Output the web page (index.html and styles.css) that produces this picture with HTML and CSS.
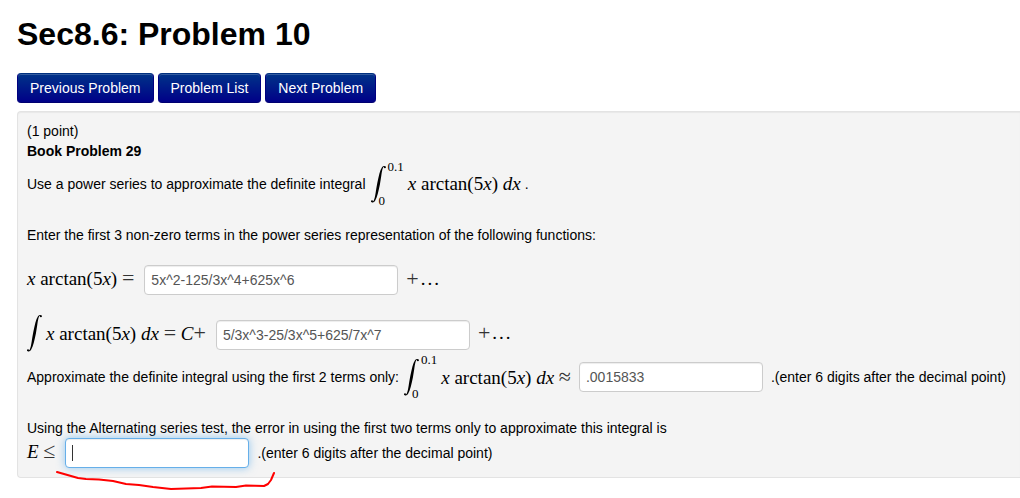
FILE: index.html
```html
<!DOCTYPE html>
<html lang="en">
<head>
    <meta charset="UTF-8">
    <meta name="viewport" content="width=device-width, initial-scale=1.0">
    <title>Sec8.6: Problem 10</title>
    <link rel="stylesheet" href="styles.css">
</head>
<body>
    <svg class="symbols" width="0" height="0" aria-hidden="true">
        <symbol id="integral" viewBox="0 0 15 38">
            <path d="M14.600 2C13.800.6 12.300.5 11 2.200 8.800 5.200 7.900 10.500 6.400 17.500 4.900 24.500 4.500 32 2.800 35.500 2.200 36.800 1.200 36.800.6 36L.2 36.600C1.200 38 2.900 37.800 4.100 35.800 6.200 32.200 7.400 26.500 8.900 19.500 10.300 12.500 10.600 6 12 2.800 12.600 1.400 13.400 1.500 14.100 2.600Z" fill="currentColor"/>
            <circle cx="13.900" cy="2.200" r="1" fill="currentColor"/>
            <circle cx="1" cy="36.200" r="1" fill="currentColor"/>
        </symbol>
    </svg>

    <h1>Sec8.6: Problem 10</h1>

    <nav class="nav">
        <a href="#previous" class="btn">Previous Problem</a>
        <a href="#list" class="btn">Problem List</a>
        <a href="#next" class="btn">Next Problem</a>
    </nav>

    <form class="problem">
        <div>(1 point)</div>
        <div><b>Book Problem 29</b></div>

        <div class="row tall">
            <span>Use a power series to approximate the definite integral</span>
            <span class="math">
                <svg class="int"><use href="#integral"/></svg>
                <span class="limits"><span>0.1</span><span class="lower">0</span></span>
                <span><i>x</i> arctan(5<i>x</i>) <i>dx</i></span>
            </span>
            <span>.</span>
        </div>

        <p>Enter the first 3 non-zero terms in the power series representation of the following functions:</p>

        <div class="row">
            <label class="math" for="series"><span><i>x</i> arctan(5<i>x</i>) <span class="op">=</span></span></label>
            <input type="text" id="series" class="wide" value="5x^2-125/3x^4+625x^6">
            <span class="math dots"><span class="op">+</span>...</span>
        </div>

        <div class="row second">
            <label class="math" for="antiderivative">
                <svg class="int"><use href="#integral"/></svg>
                <span><i>x</i> arctan(5<i>x</i>) <i>dx</i> <span class="op">=</span> <i>C</i><span class="op">+</span></span>
            </label>
            <input type="text" id="antiderivative" class="wide" value="5/3x^3-25/3x^5+625/7x^7">
            <span class="math dots"><span class="op">+</span>...</span>
        </div>

        <div class="row tall">
            <span>Approximate the definite integral using the first 2 terms only:</span>
            <label class="math" for="approx">
                <svg class="int"><use href="#integral"/></svg>
                <span class="limits"><span>0.1</span><span class="lower">0</span></span>
                <span><i>x</i> arctan(5<i>x</i>) <i>dx</i> <span class="op">≈</span></span>
            </label>
            <input type="text" id="approx" value=".0015833">
            <span class="note">.(enter 6 digits after the decimal point)</span>
        </div>

        <div class="closing">Using the Alternating series test, the error in using the first two terms only to approximate this integral is</div>

        <div class="row">
            <label class="math" for="error"><span><i>E</i> <span class="op">≤</span></span></label>
            <span class="field">
                <input type="text" id="error" autofocus>
                <span class="caret"></span>
            </span>
            <span class="note">.(enter 6 digits after the decimal point)</span>
            <svg class="mark" viewBox="0 0 220 22" aria-hidden="true">
                <path d="M1 2 8 4 22 8 30 9 43 9.500 57 11 70 14 83 15 97 17 115 19 145 18 156 16.500 180 17 190 15.500 208 16 212 14 215 10 218 3"/>
            </svg>
        </div>
    </form>
</body>
</html>
```
FILE: styles.css
```css
body {
    margin: 0;
    padding: 14px 0 20px 17px;
    background-color: #fff;
    color: #000;
    font-family: "Liberation Sans", Arial, sans-serif;
    font-size: 14px;
    line-height: 20px;
}

.symbols {
    position: absolute;
}

h1 {
    margin: 0 0 19px;
    font-size: 32px;
    line-height: 40px;
}

.nav {
    display: flex;
    gap: 4px;
    margin-bottom: 8px;
}

.btn {
    padding: 4px 12px;
    border: 1px solid #002266;
    border-color: #003080 #000080 #000070;
    border-radius: 4px;
    background-image: linear-gradient(#003388, #000088);
    box-shadow: inset 0 1px 0 rgba(255, 255, 255, 0.2);
    color: #fff;
    text-decoration: none;
}

.problem {
    padding: 9px;
    border: 1px solid #e3e3e3;
    border-right: none;
    border-radius: 4px 0 0 4px;
    background-color: #f4f4f4;
    box-shadow: inset 0 1px 1px rgba(0, 0, 0, 0.05);
    white-space: nowrap;
}

.problem p {
    margin: 18px 0 20px;
}

.row {
    position: relative;
    display: flex;
    align-items: center;
}

.tall {
    height: 46px;
}

.second {
    height: 39px;
    margin-top: 20px;
}

.closing {
    margin-top: 18px;
}

.math {
    display: flex;
    align-items: center;
    margin-right: 10px;
    padding-bottom: 3px;
    font-family: "Liberation Serif", "Times New Roman", serif;
    font-size: 19px;
}

.op {
    color: #333;
    font-size: 22px;
}

.int {
    width: 15px;
    height: 38px;
    margin-right: 4px;
}

.tall .math {
    margin: 0 8px 0 5px;
    padding-bottom: 0;
}

.tall .math:not(label) {
    margin-right: 4px;
}

.tall .int {
    margin-right: 2px;
}

.limits {
    display: flex;
    flex-direction: column;
    justify-content: space-between;
    height: 46px;
    margin-right: 4px;
    font-size: 13px;
    line-height: 12px;
}

.lower {
    margin-left: -9px;
}

.dots {
    margin-left: 8px;
    letter-spacing: 2px;
}

.note {
    margin-left: 8px;
}

.field {
    position: relative;
    display: flex;
}

.caret {
    position: absolute;
    top: 7px;
    left: 7px;
    width: 1px;
    height: 16px;
    background-color: #333;
}

input {
    box-sizing: border-box;
    width: 184px;
    height: 30px;
    padding: 4px 6px;
    border: 1px solid #ccc;
    border-radius: 4px;
    background-color: #fff;
    box-shadow: inset 0 1px 1px rgba(0, 0, 0, 0.075);
    caret-color: transparent;
    color: #555;
    font: inherit;
}

.wide {
    width: 254px;
}

input:focus {
    outline: none;
    border-color: #66afe9;
    box-shadow: inset 0 1px 1px rgba(0, 0, 0, 0.075), 0 0 8px rgba(82, 168, 236, 0.6);
}

/* pen stroke under the last answer box */
.mark {
    position: absolute;
    top: 32px;
    left: 29px;
    width: 220px;
    height: 22px;
    fill: none;
    stroke: #f00;
    stroke-width: 2;
    stroke-linecap: round;
    stroke-linejoin: round;
    pointer-events: none;
}
```
